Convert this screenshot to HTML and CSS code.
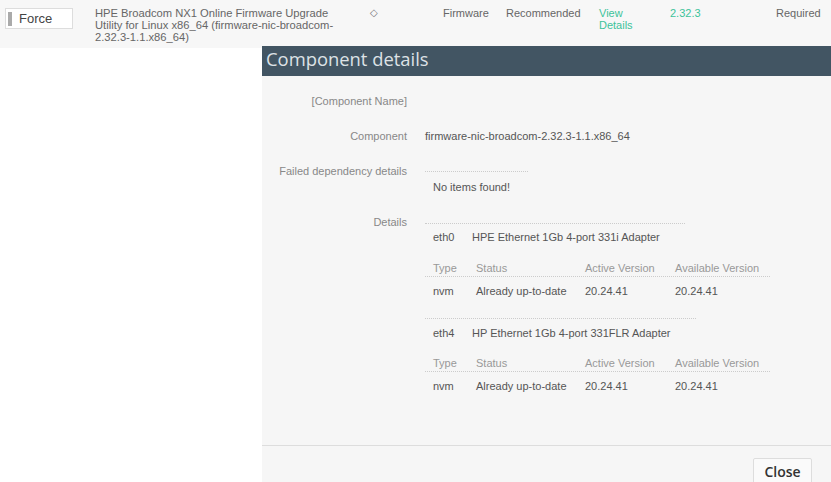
FILE: index.html
```html
<!DOCTYPE html>
<html lang="en">
<head>
    <meta charset="UTF-8">
    <title>Component details</title>
    <link rel="stylesheet" href="styles.css">
</head>
<body>
    <div class="fw-row">
        <div class="cell force-cell"><span class="force-btn"><span class="force-bar"></span>Force</span></div>
        <div class="cell desc">HPE Broadcom NX1 Online Firmware Upgrade Utility for Linux x86_64 (firmware-nic-broadcom-2.32.3-1.1.x86_64)</div>
        <div class="cell diamond">&#9671;</div>
        <div class="cell">Firmware</div>
        <div class="cell">Recommended</div>
        <div class="cell link">View<br>Details</div>
        <div class="cell link">2.32.3</div>
        <div class="cell">Required</div>
    </div>

    <div class="modal">
        <div class="modal-header">Component details</div>
        <div class="modal-body">
            <div class="detail-row">
                <div class="detail-label">[Component Name]</div>
                <div class="detail-value"></div>
            </div>
            <div class="detail-row">
                <div class="detail-label">Component</div>
                <div class="detail-value">firmware-nic-broadcom-2.32.3-1.1.x86_64</div>
            </div>
            <div class="detail-row">
                <div class="detail-label">Failed dependency details</div>
                <div class="detail-value">
                    <div class="dotted-block empty">No items found!</div>
                </div>
            </div>
            <div class="detail-row">
                <div class="detail-label">Details</div>
                <div class="detail-value">
                    <div class="adapter">
                        <div class="dotted-block adapter-title"><span class="port">eth0</span>HPE Ethernet 1Gb 4-port 331i Adapter</div>
                        <div class="ver-table">
                            <div class="ver-head">
                                <span>Type</span><span>Status</span><span>Active Version</span><span>Available Version</span>
                            </div>
                            <div class="ver-line">
                                <span>nvm</span><span>Already up-to-date</span><span>20.24.41</span><span>20.24.41</span>
                            </div>
                        </div>
                    </div>
                    <div class="adapter">
                        <div class="dotted-block adapter-title"><span class="port">eth4</span>HP Ethernet 1Gb 4-port 331FLR Adapter</div>
                        <div class="ver-table">
                            <div class="ver-head">
                                <span>Type</span><span>Status</span><span>Active Version</span><span>Available Version</span>
                            </div>
                            <div class="ver-line">
                                <span>nvm</span><span>Already up-to-date</span><span>20.24.41</span><span>20.24.41</span>
                            </div>
                        </div>
                    </div>
                </div>
            </div>
        </div>
        <div class="modal-footer">
            <button class="close-btn">Close</button>
        </div>
    </div>
</body>
</html>
```

FILE: styles.css
```css
body {
    margin: 0;
    padding: 0;
    font-family: "Liberation Sans", Arial, sans-serif;
    font-size: 11px;
    color: #666;
    background: #fff;
    width: 831px;
    height: 482px;
    overflow: hidden;
    position: relative;
}

/* firmware list row behind the dialog */
.fw-row {
    display: grid;
    grid-template-columns: 95px 275px 73px 63px 93px 71px 106px auto;
    height: 48px;
    background: #f7f7f7;
}
.cell {
    padding-top: 7px;
    line-height: 12px;
}
.force-cell {
    padding: 8px 0 0 5px;
}
.force-btn {
    display: flex;
    align-items: center;
    box-sizing: border-box;
    width: 68px;
    height: 21px;
    border: 1px solid #ddd;
    background: #fff;
    font-size: 13px;
    color: #444;
}
.force-bar {
    width: 4px;
    height: 14px;
    background: #aaa;
    margin: 0 7px 0 2px;
}
.desc {
    width: 245px;
    font-size: 11.2px;
    color: #666;
}
.diamond {
    font-size: 10px;
    color: #777;
}
.link {
    color: #3cc39a;
}

/* dialog */
.modal {
    position: absolute;
    left: 262px;
    top: 46px;
    width: 569px;
    height: 440px;
    background: #f6f6f6;
    display: flex;
    flex-direction: column;
}
.modal-header {
    height: 30px;
    line-height: 25px;
    padding-left: 4px;
    background: #425563;
    color: #dde2e6;
    font-family: "Open Sans", sans-serif;
    font-size: 18.4px;
}
.modal-body {
    height: 370px;
    box-sizing: border-box;
    padding-top: 18px;
    border-bottom: 1px solid #ddd;
}
.modal-footer {
    display: flex;
    justify-content: flex-end;
    padding: 12px 19px 0 0;
}
.close-btn {
    width: 59px;
    height: 26px;
    border: 1px solid #ddd;
    border-radius: 2px;
    background: #fafafa;
    font-family: "Open Sans", sans-serif;
    font-size: 14px;
    font-weight: 600;
    color: #333;
    padding: 0;
}

.detail-row {
    display: grid;
    grid-template-columns: 145px 1fr;
    column-gap: 18px;
    line-height: 14px;
    margin-bottom: 21px;
}
.detail-label {
    text-align: right;
    color: #888;
}
.detail-value {
    color: #555;
    min-height: 14px;
}
.dotted-block {
    border-top: 1px dotted #ccc;
    margin-top: 7px;
}
.empty {
    width: 95px;
    padding: 8px 0 0 8px;
}
.adapter {
    margin-bottom: 20px;
}
.adapter-title {
    display: inline-block;
    padding: 6px 25px 0 8px;
    margin-top: 8px;
}
.adapter + .adapter .adapter-title {
    margin-top: 0;
    padding-top: 7px;
}
.port {
    display: inline-block;
    width: 39px;
}
.ver-table {
    width: 345px;
    margin-top: 17px;
}
.adapter + .adapter .ver-table {
    margin-top: 16px;
}
.ver-head,
.ver-line {
    display: grid;
    grid-template-columns: 43px 109px 90px 103px;
}
.ver-head span,
.ver-line span {
    padding-left: 8px;
}
.ver-head {
    color: #999;
    height: 15px;
    border-bottom: 1px dotted #ccc;
}
.ver-line {
    padding-top: 7px;
    color: #555;
}
```
